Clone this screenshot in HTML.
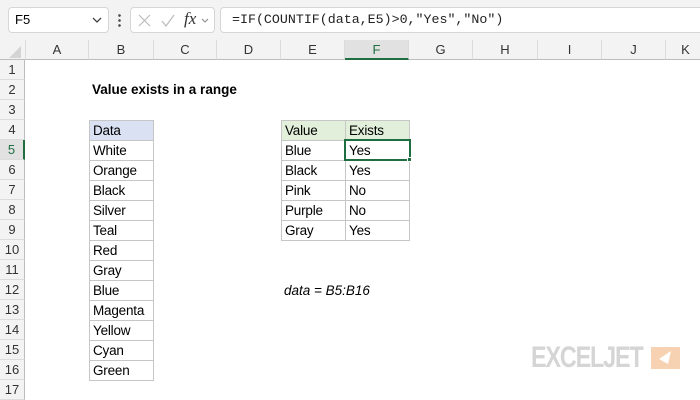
<!DOCTYPE html>
<html><head><meta charset="utf-8"><style>
*{margin:0;padding:0;box-sizing:border-box}
body{width:700px;height:400px;overflow:hidden;background:#fff;position:relative;font-family:"Liberation Sans",Calibri,sans-serif;}
.a{position:absolute}
.tb{background:#f3f3f3;left:0;top:0;width:700px;height:40px}
.box{position:absolute;background:#fff;border:1px solid #d6d6d6;border-radius:4px}
.ch{position:absolute;top:40px;height:20px;background:#f3f3f3;border-right:1px solid #dcdcdc;border-bottom:1px solid #bdbdbd;font-size:13px;color:#333;text-align:center;line-height:20px}
.rh{position:absolute;left:0;width:25px;height:20px;background:#f3f3f3;border-bottom:1px solid #dcdcdc;border-right:1px solid #bdbdbd;font-size:13px;color:#333;text-align:center;line-height:20px}
.c{position:absolute;height:21px;border:1px solid #c6c6c6;font-size:13.5px;line-height:19px;padding-left:3px;color:#000;letter-spacing:-0.2px}
</style></head><body>
<div class="a tb"></div>
<div class="box" style="left:8px;top:7px;width:101px;height:26px"></div>
<div class="a" style="left:15px;top:12px;font-size:13px">F5</div>
<svg class="a" style="left:92px;top:16px" width="10" height="8"><path d="M1 2l4 4 4-4" stroke="#444" fill="none" stroke-width="1.3"/></svg>
<div class="a" style="left:118px;top:13px;width:3px;height:14px;background:radial-gradient(circle,#555 1.2px,transparent 1.5px) 0 0/3px 5px repeat-y"></div>
<div class="box" style="left:130px;top:7px;width:85px;height:26px"></div>
<svg class="a" style="left:138px;top:14px" width="72" height="14"><path d="M1 1l11 11M12 1L1 12" stroke="#bbb" stroke-width="1.2"/><path d="M24 7l4 5 8-11" stroke="#bbb" fill="none" stroke-width="1.2"/><path d="M64 5l3 3 3-3" stroke="#888" fill="none" stroke-width="1"/></svg>
<div class="a" style="left:184px;top:9px;font-family:'Liberation Serif',serif;font-style:italic;font-size:17px;color:#333">fx</div>
<div class="box" style="left:220px;top:7px;width:490px;height:26px"></div>
<div class="a" style="left:232px;top:12px;font-family:'Liberation Mono',monospace;font-size:13.3px;color:#222">=IF(COUNTIF(data,E5)&gt;0,"Yes","No")</div>
<div class="ch" style="left:0;width:26px"></div>
<svg class="a" style="left:8px;top:45px" width="14" height="14"><path d="M13 1V13H1Z" fill="#d4d4d4"/></svg>
<div class="ch" style="left:26px;width:63px">A</div>
<div class="ch" style="left:89px;width:65px">B</div>
<div class="ch" style="left:154px;width:63px">C</div>
<div class="ch" style="left:217px;width:64px">D</div>
<div class="ch" style="left:281px;width:64px">E</div>
<div class="ch" style="left:345px;width:64px;background:#e1e1e1;color:#1e6e42;border-bottom:2px solid #1e6e42">F</div>
<div class="ch" style="left:409px;width:64px">G</div>
<div class="ch" style="left:473px;width:65px">H</div>
<div class="ch" style="left:538px;width:64px">I</div>
<div class="ch" style="left:602px;width:64px">J</div>
<div class="ch" style="left:666px;width:40px">K</div>
<div class="rh" style="top:60px">1</div><div class="rh" style="top:80px">2</div><div class="rh" style="top:100px">3</div><div class="rh" style="top:120px">4</div>
<div class="rh" style="top:140px;background:#e1e1e1;color:#1e6e42;border-right:2px solid #1e6e42">5</div>
<div class="rh" style="top:160px">6</div><div class="rh" style="top:180px">7</div><div class="rh" style="top:200px">8</div><div class="rh" style="top:220px">9</div><div class="rh" style="top:240px">10</div><div class="rh" style="top:260px">11</div><div class="rh" style="top:280px">12</div><div class="rh" style="top:300px">13</div><div class="rh" style="top:320px">14</div><div class="rh" style="top:340px">15</div><div class="rh" style="top:360px">16</div><div class="rh" style="top:380px">17</div>
<div class="a" style="left:92px;top:82px;font-weight:bold;font-size:13.5px">Value exists in a range</div>
<div class="c" style="left:89px;top:120px;width:65px;background:#d9e1f2">Data</div>
<div class="c" style="left:89px;top:140px;width:65px">White</div>
<div class="c" style="left:89px;top:160px;width:65px">Orange</div>
<div class="c" style="left:89px;top:180px;width:65px">Black</div>
<div class="c" style="left:89px;top:200px;width:65px">Silver</div>
<div class="c" style="left:89px;top:220px;width:65px">Teal</div>
<div class="c" style="left:89px;top:240px;width:65px">Red</div>
<div class="c" style="left:89px;top:260px;width:65px">Gray</div>
<div class="c" style="left:89px;top:280px;width:65px">Blue</div>
<div class="c" style="left:89px;top:300px;width:65px">Magenta</div>
<div class="c" style="left:89px;top:320px;width:65px">Yellow</div>
<div class="c" style="left:89px;top:340px;width:65px">Cyan</div>
<div class="c" style="left:89px;top:360px;width:65px">Green</div>
<div class="c" style="left:281px;top:120px;width:65px;background:#e2efda">Value</div>
<div class="c" style="left:345px;top:120px;width:65px;background:#e2efda">Exists</div>
<div class="c" style="left:281px;top:140px;width:65px">Blue</div><div class="c" style="left:345px;top:140px;width:65px">Yes</div>
<div class="c" style="left:281px;top:160px;width:65px">Black</div><div class="c" style="left:345px;top:160px;width:65px">Yes</div>
<div class="c" style="left:281px;top:180px;width:65px">Pink</div><div class="c" style="left:345px;top:180px;width:65px">No</div>
<div class="c" style="left:281px;top:200px;width:65px">Purple</div><div class="c" style="left:345px;top:200px;width:65px">No</div>
<div class="c" style="left:281px;top:220px;width:65px">Gray</div><div class="c" style="left:345px;top:220px;width:65px">Yes</div>
<div class="a" style="left:344px;top:139px;width:67px;height:22px;border:2px solid #1e6e42"></div>
<div class="a" style="left:407px;top:157px;width:5px;height:5px;background:#1e6e42;border:1px solid #fff"></div>
<div class="a" style="left:284px;top:283px;font-style:italic;font-size:13.5px">data = B5:B16</div>
<div class="a" style="left:531px;top:341px;font-weight:bold;font-size:30px;color:#d5d5d5;letter-spacing:-1.5px;transform:scaleX(0.78);transform-origin:left;white-space:nowrap">EXCELJET</div>
<div class="a" style="left:651px;top:347px;width:29px;height:22px;background:#f6d2b3"></div>
<svg class="a" style="left:651px;top:347px" width="29" height="22"><path d="M20 4L8 12l9 5z" fill="#fff"/></svg>
</body></html>
